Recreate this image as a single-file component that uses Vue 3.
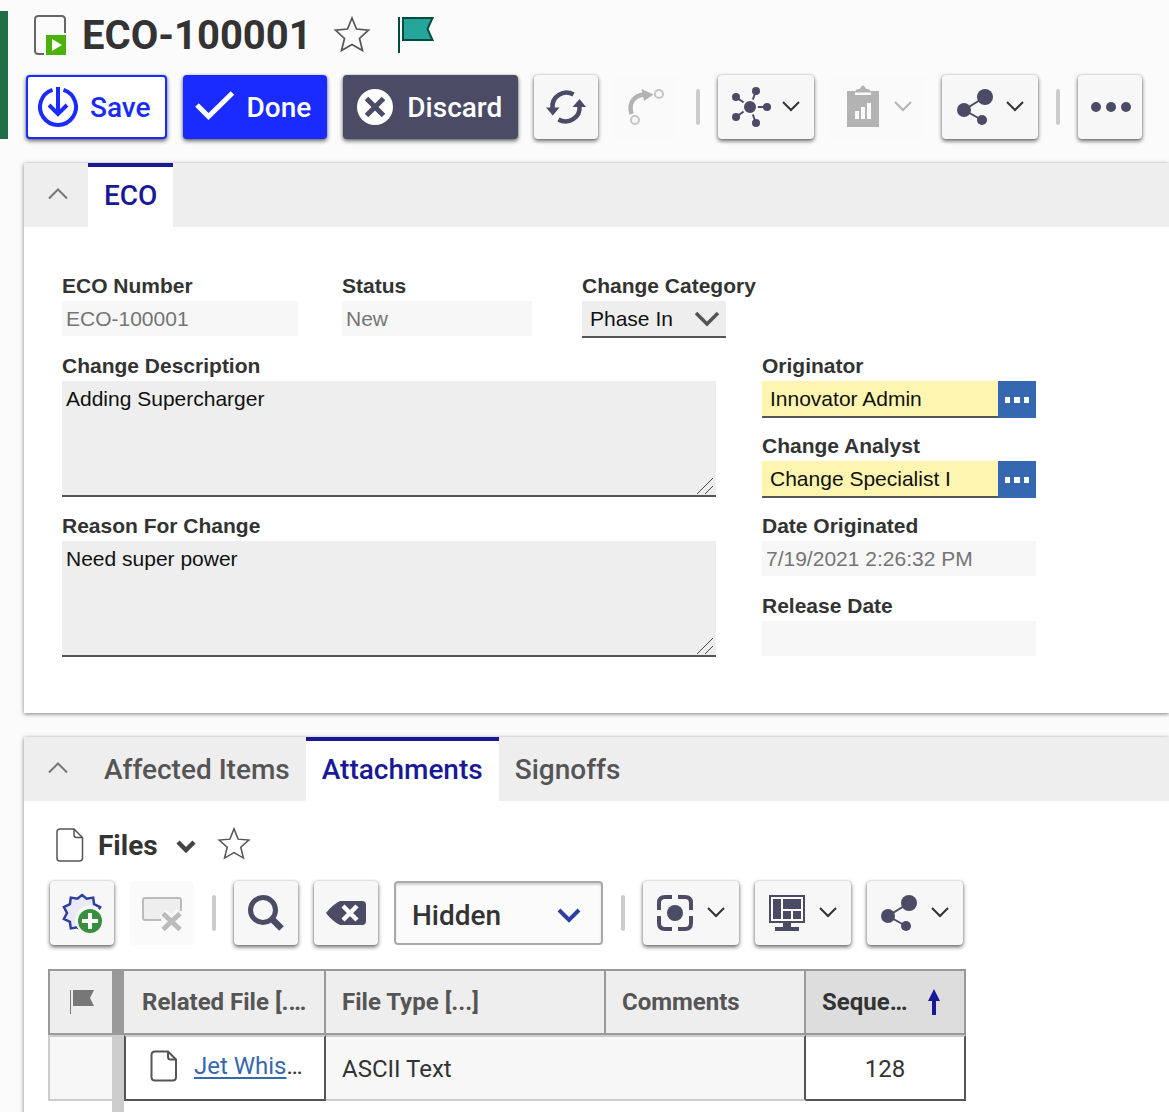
<script setup>
import { ref } from 'vue';

let category = ref('Phase In');
let description = ref('Adding Supercharger');
let reason = ref('Need super power');
let originator = ref('Innovator Admin');
let analyst = ref('Change Specialist I');
let mode = ref('Hidden');
let activeTab = ref('Attachments');
let tabs = ['Affected Items', 'Attachments', 'Signoffs'];
</script>

<template>
    <div class="page">
        <header class="item-header">
            <div class="item-color"></div>
            <div class="item-main">
                <div class="item-title">
                    <svg class="icon" viewBox="0 0 40 40">
                        <path d="M14 39H8.500Q5 39 5 35.500V4.500Q5 1 8.500 1H31.500Q35 1 35 4.500V18" fill="none" stroke="#666" stroke-width="2" />
                        <rect x="16" y="20" width="20" height="20" fill="#4db208" />
                        <path d="M22 24v12l10-6z" fill="#fff" />
                    </svg>
                    <h1>ECO-100001</h1>
                    <button type="button" class="plain" aria-label="Favorite">
                        <svg class="icon" viewBox="0 0 40 40">
                            <path d="M20 3L24.500 14L36.500 15.200L27.500 23.500L30.500 35.500L20 29.500L9.500 35.500L12.500 23.500L3.500 15.200L15.500 14Z" fill="none" stroke="#555" stroke-width="1.700" />
                        </svg>
                    </button>
                    <button type="button" class="plain" aria-label="Claim">
                        <svg class="icon" viewBox="0 0 40 40">
                            <path d="M3 2v36" stroke="#004d40" stroke-width="2" />
                            <path d="M7 3h29.500l-5 11 5 11H7z" fill="#26a69a" stroke="#004d40" stroke-width="2" />
                        </svg>
                    </button>
                </div>
                <div class="toolbar">
                    <button type="button" class="btn save">
                        <svg class="icon" viewBox="0 0 40 40">
                            <path d="M14.500 2.800A18 18 0 1 0 25.500 2.800" fill="none" stroke="currentColor" stroke-width="4" />
                            <path d="M20 0v26M11 18l9 9 9-9" fill="none" stroke="currentColor" stroke-width="4" />
                        </svg>
                        Save
                    </button>
                    <button type="button" class="btn done">
                        <svg class="icon" viewBox="0 0 40 40">
                            <path d="M2 18L13.500 29.500L37.500 6" fill="none" stroke="#fff" stroke-width="5" />
                        </svg>
                        Done
                    </button>
                    <button type="button" class="btn discard">
                        <svg class="icon" viewBox="0 0 40 40">
                            <circle cx="20" cy="20" r="18" fill="#fff" />
                            <path d="M11.500 11.500l17 17M28.500 11.500l-17 17" stroke="#4c4b66" stroke-width="5" />
                        </svg>
                        Discard
                    </button>
                    <button type="button" class="btn" aria-label="Refresh">
                        <svg class="icon" viewBox="0 0 40 40">
                            <path d="M6.500 21A14 14 0 0 1 27.500 7.500M33.500 19A14 14 0 0 1 12.500 32.500" fill="none" stroke="#4c4b66" stroke-width="4.500" />
                            <path d="M0 20.500h13.500L6.800 28.500zM26.500 20h13.500L33.500 12z" fill="#4c4b66" />
                        </svg>
                    </button>
                    <button type="button" class="btn" disabled aria-label="Promote">
                        <svg class="icon" viewBox="0 0 40 40">
                            <path d="M5.500 27C2 15 9 8 19 7.500" fill="none" stroke="#b3b3b3" stroke-width="4.500" />
                            <path d="M15.500 2L27.500 7.500L18 14z" fill="#b3b3b3" />
                            <circle cx="33" cy="7" r="4" fill="none" stroke="#c4c4c4" stroke-width="2" />
                            <circle cx="9" cy="33" r="4" fill="none" stroke="#c4c4c4" stroke-width="2" />
                        </svg>
                    </button>
                    <span class="separator"></span>
                    <button type="button" class="btn" aria-label="Navigate">
                        <svg class="icon" viewBox="0 0 40 40" fill="#4c4b66" stroke="#4c4b66">
                            <path d="M20 20L6 10M20 20L26 4M20 20H36M20 20L26 36M20 20L6 30" stroke-width="2" />
                            <circle cx="20" cy="20" r="7" stroke="#f7f7f7" stroke-width="2" />
                            <g stroke="none">
                                <circle cx="6" cy="10" r="4" />
                                <circle cx="26" cy="4" r="4" />
                                <circle cx="37" cy="20" r="4" />
                                <circle cx="26" cy="36" r="4" />
                                <circle cx="6" cy="30" r="4" />
                            </g>
                        </svg>
                        <svg class="chevron" viewBox="0 0 22 12"><path d="M3 1l8 8 8-8" /></svg>
                    </button>
                    <button type="button" class="btn" disabled aria-label="Reports">
                        <svg class="icon" viewBox="0 0 40 40" fill="#b3b3b3">
                            <path d="M5 4h8v4h16V4h8v36H5z" />
                            <path d="M13 5.500Q13 2 17 2Q18.500 2 19 0Q21-3 23 0Q23.500 2 25 2Q29 2 29 5.500z" />
                            <path d="M13 24h4v8h-4zM19 20h4v12h-4zM25 16h4v16h-4z" fill="#fafafa" />
                        </svg>
                        <svg class="chevron" viewBox="0 0 22 12"><path d="M3 1l8 8 8-8" /></svg>
                    </button>
                    <button type="button" class="btn" aria-label="Share">
                        <svg class="icon" viewBox="0 0 40 40" fill="#4c4b66">
                            <path d="M31 10L10 23L28 33" fill="none" stroke="#4c4b66" stroke-width="2" />
                            <circle cx="31" cy="10" r="8" />
                            <circle cx="10" cy="23" r="7" />
                            <circle cx="28" cy="33" r="5" />
                        </svg>
                        <svg class="chevron" viewBox="0 0 22 12"><path d="M3 1l8 8 8-8" /></svg>
                    </button>
                    <span class="separator"></span>
                    <button type="button" class="btn" aria-label="More">
                        <svg class="icon" viewBox="0 0 40 40" fill="#4c4b66">
                            <circle cx="6" cy="20" r="5" />
                            <circle cx="21" cy="20" r="5" />
                            <circle cx="36" cy="20" r="5" />
                        </svg>
                    </button>
                </div>
            </div>
        </header>

        <section class="panel">
            <div class="tabs">
                <button type="button" class="plain collapse" aria-label="Collapse">
                    <svg class="chevron" viewBox="0 0 22 12"><path d="M2 9.500l9-9 9 9" /></svg>
                </button>
                <button type="button" class="tab active">ECO</button>
            </div>
            <form class="form" @submit.prevent>
                <div class="field number">
                    <label for="number">ECO Number</label>
                    <input type="text" id="number" value="ECO-100001" disabled>
                </div>
                <div class="field status">
                    <label for="status">Status</label>
                    <input type="text" id="status" value="New" disabled>
                </div>
                <div class="field category">
                    <label for="category">Change Category</label>
                    <div class="select">
                        <select id="category" v-model="category">
                            <option>Phase In</option>
                        </select>
                        <svg class="arrow" viewBox="0 0 24 16"><path d="M1 1l11 11L23 1" fill="none" stroke="#555" stroke-width="3.500" /></svg>
                    </div>
                </div>
                <div class="field area">
                    <label for="description">Change Description</label>
                    <div class="textbox">
                        <textarea id="description" v-model="description"></textarea>
                        <svg class="grip" viewBox="0 0 16 16"><path d="M0 16L16 0M8 16l8-8" stroke="#444" /></svg>
                    </div>
                </div>
                <div class="field area">
                    <label for="reason">Reason For Change</label>
                    <div class="textbox">
                        <textarea id="reason" v-model="reason"></textarea>
                        <svg class="grip" viewBox="0 0 16 16"><path d="M0 16L16 0M8 16l8-8" stroke="#444" /></svg>
                    </div>
                </div>
                <div class="people">
                    <div class="field">
                        <label for="originator">Originator</label>
                        <div class="lookup">
                            <input type="text" id="originator" v-model="originator">
                            <button type="button" aria-label="Select originator">
                                <svg viewBox="0 0 26 6"><path d="M1 0h5v6H1zM10 0h6v6h-6zM20 0h5v6h-5z" fill="#fff" /></svg>
                            </button>
                        </div>
                    </div>
                    <div class="field">
                        <label for="analyst">Change Analyst</label>
                        <div class="lookup">
                            <input type="text" id="analyst" v-model="analyst">
                            <button type="button" aria-label="Select analyst">
                                <svg viewBox="0 0 26 6"><path d="M1 0h5v6H1zM10 0h6v6h-6zM20 0h5v6h-5z" fill="#fff" /></svg>
                            </button>
                        </div>
                    </div>
                    <div class="field">
                        <label for="created">Date Originated</label>
                        <input type="text" id="created" value="7/19/2021 2:26:32 PM" disabled>
                    </div>
                    <div class="field">
                        <label for="released">Release Date</label>
                        <input type="text" id="released" value="" disabled>
                    </div>
                </div>
            </form>
        </section>

        <section class="panel relations">
            <div class="tabs">
                <button type="button" class="plain collapse" aria-label="Collapse">
                    <svg class="chevron" viewBox="0 0 22 12"><path d="M2 9.500l9-9 9 9" /></svg>
                </button>
                <button v-for="tab in tabs" :key="tab" type="button" class="tab" :class="{ active: tab == activeTab }" @click="activeTab = tab">{{ tab }}</button>
            </div>
            <div class="grid-title">
                <svg class="file" viewBox="0 0 28 34">
                    <path d="M4 1h14l8.500 8.500V30q0 3-3 3H4q-3 0-3-3V4q0-3 3-3zM18 1v6q0 2.500 2.500 2.500h6" fill="none" stroke="#555" stroke-width="1.500" />
                </svg>
                <h2>Files</h2>
                <button type="button" class="plain" aria-label="Views">
                    <svg class="views" viewBox="0 0 20 14"><path d="M2 2l8 8 8-8" fill="none" stroke="#444" stroke-width="4.500" /></svg>
                </button>
                <button type="button" class="plain" aria-label="Favorite">
                    <svg class="small-star" viewBox="0 0 40 40">
                        <path d="M20 2L24.500 13.500L36.500 14.500L27.500 22.500L30.500 34.500L20 28.500L9.500 34.500L12.500 22.500L3.500 14.500L15.500 13.500Z" fill="none" stroke="#555" stroke-width="1.700" />
                    </svg>
                </button>
            </div>
            <div class="toolbar">
                <button type="button" class="btn" aria-label="New">
                    <svg class="icon" viewBox="0 0 40 40">
                        <path d="M20 2L24.600 5.700L31.200 4.600L32.100 11.200L38.100 14.100L35 20L38.100 25.900L32.100 28.800L31.200 35.400L24.600 34.300L20 38L15.400 34.300L8.800 35.400L7.900 28.800L1.900 25.900L5 20L1.900 14.100L7.900 11.200L8.800 4.600L15.400 5.700Z" fill="#e8eaf6" stroke="#303f9f" stroke-width="2.500" />
                        <path d="M41 14V41H12V36.500H17A14 14 0 0 1 38 17L40 16z" fill="#f7f7f7" />
                        <circle cx="28" cy="28" r="14" fill="#f7f7f7" />
                        <circle cx="28" cy="28" r="12" fill="#388e3c" />
                        <path d="M28 20v16M20 28h16" stroke="#fff" stroke-width="4" />
                    </svg>
                </button>
                <button type="button" class="btn" disabled aria-label="Delete">
                    <svg class="icon" viewBox="0 0 40 40">
                        <path d="M39 18V7q0-2-2-2H3Q1 5 1 7v18q0 2 2 2h16" fill="#eee" stroke="#bbb" stroke-width="2" />
                        <path d="M21 19.500l17 17M38 19.500l-17 17" stroke="#fafafa" stroke-width="9" />
                        <path d="M21 20.500l17 16M38 20.500l-17 16" stroke="#bbb" stroke-width="5" />
                    </svg>
                </button>
                <span class="separator"></span>
                <button type="button" class="btn" aria-label="Search">
                    <svg class="icon" viewBox="0 0 40 40" fill="none" stroke="#4c4b66">
                        <circle cx="17" cy="17" r="12.500" stroke-width="5" />
                        <path d="M26 26l9.500 9.500" stroke-width="6.500" />
                    </svg>
                </button>
                <button type="button" class="btn" aria-label="Clear search">
                    <svg class="icon" viewBox="0 0 40 40">
                        <path d="M0 20Q6 12 14 8h22q4 0 4 4v16q0 4-4 4H14Q6 28 0 20z" fill="#4c4b66" />
                        <path d="M17 13l14 14M31 13L17 27" stroke="#fff" stroke-width="4.500" />
                    </svg>
                </button>
                <div class="mode">
                    <select v-model="mode" aria-label="Search mode">
                        <option>Hidden</option>
                    </select>
                    <svg class="arrow" viewBox="0 0 24 16"><path d="M2 3l10 10L22 3" fill="none" stroke="#303f9f" stroke-width="4" /></svg>
                </div>
                <span class="separator"></span>
                <button type="button" class="btn" aria-label="Focus">
                    <svg class="icon" viewBox="0 0 40 40" fill="none" stroke="#4c4b66">
                        <path d="M17 4h-7q-6 0-6 6v7M23 4h7q6 0 6 6v7M17 36h-7q-6 0-6-6v-7M23 36h7q6 0 6-6v-7" stroke-width="4" />
                        <circle cx="20" cy="20" r="8" fill="#4c4b66" stroke="none" />
                    </svg>
                    <svg class="chevron" viewBox="0 0 22 12"><path d="M3 1l8 8 8-8" /></svg>
                </button>
                <button type="button" class="btn" aria-label="Layout">
                    <svg class="icon" viewBox="0 0 40 40" fill="#4c4b66">
                        <rect x="3" y="3" width="34" height="26" fill="#fff" stroke="#4c4b66" stroke-width="2" />
                        <path d="M6 6h8v20H6zM16 6h18v10H16zM16 18h8v8h-8zM26 18h8v8h-8zM16 29h8v5h8v4H8v-4h8z" />
                    </svg>
                    <svg class="chevron" viewBox="0 0 22 12"><path d="M3 1l8 8 8-8" /></svg>
                </button>
                <button type="button" class="btn" aria-label="Share">
                    <svg class="icon" viewBox="0 0 40 40" fill="#4c4b66">
                        <path d="M30 10L9 23L27 33" fill="none" stroke="#4c4b66" stroke-width="2" />
                        <circle cx="30" cy="10" r="8" />
                        <circle cx="9" cy="23" r="7" />
                        <circle cx="27" cy="33" r="5" />
                    </svg>
                    <svg class="chevron" viewBox="0 0 22 12"><path d="M3 1l8 8 8-8" /></svg>
                </button>
            </div>
            <table>
                <colgroup>
                    <col class="col-flag">
                    <col class="col-freeze">
                    <col class="col-file">
                    <col class="col-type">
                    <col class="col-comments">
                    <col class="col-sequence">
                </colgroup>
                <thead>
                    <tr>
                        <th class="flag">
                            <svg viewBox="0 0 24 24"><path d="M0 0h1v24H0zM3 0h21l-4 8 4 8H3z" fill="#777" /></svg>
                        </th>
                        <th class="freeze"></th>
                        <th>Related File [.…</th>
                        <th>File Type [...]</th>
                        <th>Comments</th>
                        <th class="sorted">
                            <div>
                                Seque…
                                <svg viewBox="0 0 12 26"><path d="M6 0l6 12H8v14H4V12H0z" fill="#191998" /></svg>
                            </div>
                        </th>
                    </tr>
                </thead>
                <tbody>
                    <tr>
                        <td class="flag"></td>
                        <td class="freeze"></td>
                        <td class="related">
                            <div>
                                <svg viewBox="0 0 28 32">
                                    <path d="M5 1.500h13l8 8V27q0 3.500-3.500 3.500H5q-3.500 0-3.500-3.500V5Q1.500 1.500 5 1.500zM18 1.500V7q0 2.500 2.500 2.500H26" fill="none" stroke="#555" stroke-width="2" />
                                </svg>
                                <span><a href="#">Jet Whis</a>…</span>
                            </div>
                        </td>
                        <td>ASCII Text</td>
                        <td class="comments"></td>
                        <td class="sequence">128</td>
                    </tr>
                    <tr class="rest">
                        <td></td>
                        <td class="freeze"></td>
                        <td colspan="4"></td>
                    </tr>
                </tbody>
            </table>
        </section>
    </div>
</template>

<style>
body {
    background-color: #fbfbfb;
}
</style>

<style scoped>
.page {
    display: flex;
    flex-direction: column;
    height: 100vh;
    overflow: hidden;
    font-family: Roboto, sans-serif;
    color: #333;
}

.page * {
    box-sizing: border-box;
}

h1, h2 {
    margin: 0;
    padding-top: 2px;
    font-weight: 700;
}

h1 {
    font-size: 40px;
    line-height: 46px;
}

h2 {
    font-size: 28px;
    line-height: 32px;
}

svg {
    display: block;
    flex: none;
    overflow: visible;
}

.icon {
    width: 40px;
    height: 40px;
}

.plain {
    padding: 0;
    border: none;
    background: none;
    cursor: pointer;
}

.item-header {
    display: flex;
    flex: none;
    padding-top: 11px;
}

.item-color {
    width: 8px;
    background-color: #217045;
}

.item-main {
    flex: 1;
    padding-left: 18px;
}

.item-title {
    display: flex;
    align-items: center;
    gap: 24px;
    height: 48px;
    margin-bottom: 16px;
    padding-left: 4px;
}

.item-title h1 {
    margin: 0 -4px 0 -12px;
}

.toolbar {
    display: flex;
    align-items: center;
    gap: 16px;
}

.btn {
    display: flex;
    flex: none;
    align-items: center;
    gap: 12px;
    height: 64px;
    padding: 0 12px;
    border: none;
    border-radius: 4px;
    background-color: #f7f7f7;
    box-shadow: 0 2px 4px rgba(0, 0, 0, 0.6), 0 0 2px rgba(0, 0, 0, 0.2);
    font-family: inherit;
    font-size: 28px;
    font-weight: 500;
    cursor: pointer;
}

.btn:disabled {
    background-color: #fafafa;
    box-shadow: none;
    cursor: default;
}

.btn .chevron {
    margin-left: -2px;
}

.chevron {
    width: 22px;
    height: 12px;
    fill: none;
    stroke: #333;
    stroke-width: 2;
}

.btn:disabled .chevron {
    stroke: #b3b3b3;
}

.save {
    padding: 0 14px 0 10px;
    border: 2px solid #1a2bff;
    background-color: #fff;
    color: #1a2bff;
}

.done, .discard {
    padding-right: 16px;
    color: #fff;
}

.done {
    background-color: #1a2bff;
}

.discard {
    background-color: #4c4b66;
}

.separator {
    flex: none;
    width: 4px;
    height: 36px;
    margin: 0 2px;
    border-radius: 2px;
    background-color: #ccc;
}

.panel {
    flex: none;
    margin: 24px 0 0 24px;
    background-color: #fff;
    box-shadow: 0 1px 4px rgba(0, 0, 0, 0.5);
}

.relations {
    flex: 1;
}

.tabs {
    display: flex;
    height: 64px;
    background-color: #eee;
}

.collapse {
    display: flex;
    align-items: center;
    justify-content: center;
    width: 64px;
    padding-left: 4px;
}

.collapse .chevron {
    stroke: #777;
}

.tab {
    padding: 0 16px 4px;
    border: none;
    border-top: 4px solid transparent;
    background: none;
    font-family: inherit;
    font-size: 28px;
    font-weight: 500;
    color: #555;
    cursor: pointer;
}

.tab.active {
    border-top-color: #191998;
    background-color: #fff;
    color: #191998;
}

.form {
    display: grid;
    grid-template-columns: 280px 240px 180px 274px;
    grid-template-rows: 80px 160px 160px;
    padding: 45px 38px 41px;
    font-family: "Liberation Sans", Arial, sans-serif;
    font-size: 21px;
}

.field {
    height: 80px;
}

.field label {
    display: block;
    margin-bottom: 1px;
    line-height: 28px;
    font-weight: bold;
}

.field input, .field select, .field textarea {
    display: block;
    width: 100%;
    height: 35px;
    margin: 0;
    padding: 0 4px;
    border: none;
    border-radius: 0;
    outline: none;
    background-color: #f7f7f7;
    font-family: inherit;
    font-size: 21px;
    color: #111;
}

.field input:disabled {
    color: #757575;
}

.number {
    padding-right: 44px;
}

.status {
    padding-right: 50px;
}

.select, .textbox, .mode {
    position: relative;
}

.select {
    width: 144px;
}

.field select {
    height: 37px;
    padding: 0 8px;
    border-bottom: 2px solid #555;
    background-color: #eee;
    appearance: none;
}

.arrow {
    position: absolute;
    right: 7px;
    top: 11px;
    width: 24px;
    height: 16px;
    pointer-events: none;
}

.area {
    grid-column: 1 / 4;
    height: 160px;
    padding-right: 46px;
}

.field textarea {
    height: 116px;
    padding: 5px 4px;
    border-bottom: 2px solid #555;
    background-color: #eee;
    line-height: 26px;
    resize: none;
}

.grip {
    position: absolute;
    right: 3px;
    bottom: 3px;
    width: 16px;
    height: 16px;
}

.people {
    grid-column: 4;
    grid-row: 2 / 4;
}

.lookup {
    display: flex;
    height: 37px;
}

.field .lookup input {
    flex: 1;
    height: 37px;
    padding: 0 8px;
    border-bottom: 2px solid #555;
    background-color: #fdf5b0;
}

.lookup button {
    display: flex;
    align-items: center;
    justify-content: center;
    width: 38px;
    padding: 0;
    border: none;
    background-color: #3668b1;
}

.lookup svg {
    width: 26px;
    height: 6px;
}

.relations .toolbar {
    padding-left: 26px;
}

.grid-title {
    display: flex;
    align-items: center;
    height: 64px;
    margin: 12px 0 4px;
    padding-left: 32px;
}

.file {
    width: 28px;
    height: 34px;
    margin-right: 14px;
}

.views {
    width: 20px;
    height: 14px;
    margin: 4px 20px 0 18px;
}

.small-star {
    width: 36px;
    height: 36px;
}

.mode select {
    display: block;
    width: 209px;
    height: 64px;
    margin: 0;
    padding: 4px 16px 0;
    border: 2px solid #aaa;
    border-radius: 4px;
    outline: none;
    appearance: none;
    background-color: #fbfbfb;
    box-shadow: inset 0 2px 2px rgba(0, 0, 0, 0.15);
    font-family: inherit;
    font-size: 28px;
    font-weight: 500;
    color: #333;
}

.mode .arrow {
    top: 26px;
    right: 22px;
}

table {
    table-layout: fixed;
    width: 918px;
    margin: 24px 0 0 24px;
    border-collapse: separate;
    border-spacing: 0;
    font-size: 24px;
}

.col-flag {
    width: 64px;
}

.col-freeze {
    width: 12px;
}

.col-file {
    width: 202px;
}

.col-type {
    width: 280px;
}

.col-comments {
    width: 200px;
}

.col-sequence {
    width: 160px;
}

th, td {
    height: 66px;
    padding: 0 16px;
    overflow: hidden;
    text-align: left;
    white-space: nowrap;
}

th {
    border: 2px solid #999;
    border-left: none;
    background-color: #eee;
    font-weight: 700;
    color: #555;
}

td {
    padding-top: 2px;
    border-top: 2px solid #ccc;
    border-bottom: 2px solid #ccc;
    background-color: #f7f7f7;
    font-weight: 400;
}

th.flag {
    padding: 0 20px;
    border-left: 2px solid #999;
    border-right: none;
}

th.flag svg {
    width: 24px;
    height: 24px;
}

td.flag {
    border-left: 2px solid #ccc;
}

.freeze {
    padding: 0;
}

th.freeze {
    background-color: #999;
}

td.freeze {
    border-color: #ccc;
    background-color: #ccc;
}

th.freeze + th {
    padding-left: 18px;
}

th.sorted {
    background-color: #ddd;
    color: #333;
}

.sorted div {
    display: flex;
    align-items: center;
    justify-content: space-between;
    padding-right: 8px;
}

.sorted svg {
    width: 12px;
    height: 26px;
}

td.related, td.sequence {
    border-right: 2px solid #555;
    border-bottom-color: #555;
    background-color: #fff;
}

td.related {
    padding: 0 0 4px 24px;
    border-left: 2px solid #555;
}

.related div {
    display: flex;
    align-items: center;
    gap: 16px;
}

.related svg {
    width: 28px;
    height: 32px;
}

.related a {
    color: #3668b1;
    text-underline-offset: 3px;
}

td.comments {
    border-right: 2px solid #555;
}

td.sequence {
    text-align: center;
}

.rest td {
    border: none;
    background-color: transparent;
}

.rest td.freeze {
    background-color: #ccc;
}
</style>
